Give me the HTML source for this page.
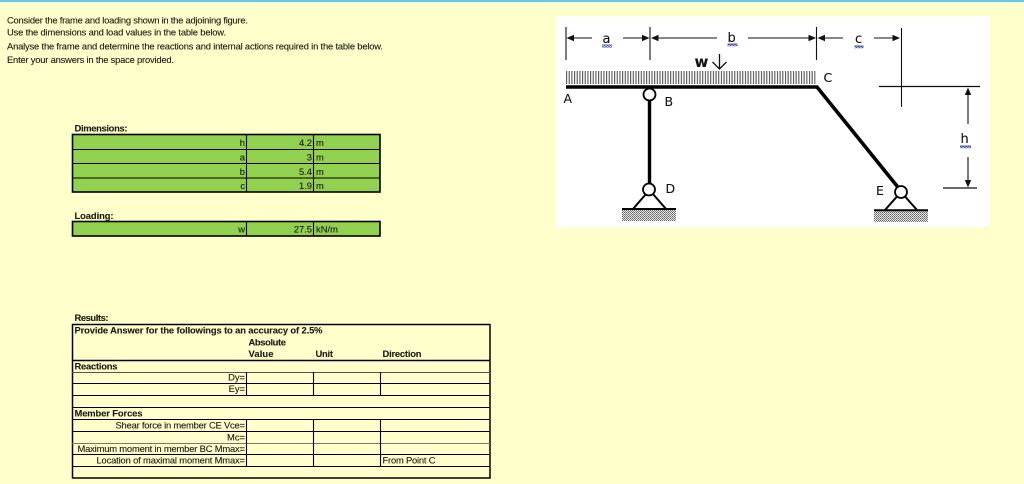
<!DOCTYPE html>
<html>
<head>
<meta charset="utf-8">
<style>
html,body{margin:0;padding:0;background:#ffffcc;width:1024px;height:484px;overflow:hidden}
svg{display:block}
text{font-family:"Liberation Sans",Arial,sans-serif;font-size:9.4px;fill:#1c1c14;stroke:#1c1c14;stroke-width:.12}
.b{font-weight:bold}
.fig{font-family:"DejaVu Sans",sans-serif;fill:#111;stroke:#111;stroke-width:.1}
.r{text-anchor:end}
</style>
</head>
<body>
<svg width="1024" height="484" viewBox="0 0 1024 484" xmlns="http://www.w3.org/2000/svg">
<defs>
<pattern id="load" width="2.67" height="13" patternUnits="userSpaceOnUse" x="566">
<rect x="0" width="1.1" height="13" fill="#555"/>
</pattern>
<pattern id="hatch" width="2" height="2" patternUnits="userSpaceOnUse">
<rect width="2" height="2" fill="#e4e4e4"/>
<rect width="1" height="1" fill="#666"/>
<rect x="1" y="1" width="1" height="1" fill="#888"/>
</pattern>
<pattern id="sq" width="3" height="2" patternUnits="userSpaceOnUse">
<path d="M0 .4 L1.500 1.600 L3 .4" fill="none" stroke="#1f48e8" stroke-width=".9"/>
</pattern>
</defs>

<rect width="1024" height="484" fill="#ffffcc"/>
<rect width="1024" height="2" fill="#62c6ee"/>

<!-- Intro -->
<text x="7" y="23.5" textLength="241">Consider the frame and loading shown in the adjoining figure.</text>
<text x="7" y="35.5" textLength="219">Use the dimensions and load values in the table below.</text>
<text x="7" y="49.5" textLength="376">Analyse the frame and determine the reactions and internal actions required in the table below.</text>
<text x="7" y="63" textLength="167">Enter your answers in the space provided.</text>

<!-- Dimensions -->
<text class="b" x="74.5" y="131.5" textLength="53">Dimensions:</text>
<rect x="72.5" y="134.5" width="307.5" height="57.5" fill="#92d050" stroke="#000" stroke-width="1.6"/>
<path d="M72 149.5H380M72 163.500H380M72 178H380M246.500 134V192M313.500 134V192" stroke="#000" stroke-width="1.100" fill="none"/>
<text class="r" x="245" y="146">h</text>
<text class="r" x="245" y="160.500">a</text>
<text class="r" x="245" y="175">b</text>
<text class="r" x="245" y="189">c</text>
<text class="r" x="312" y="146">4.2</text>
<text class="r" x="312" y="160.500">3</text>
<text class="r" x="312" y="175">5.4</text>
<text class="r" x="312" y="189">1.9</text>
<text x="316" y="146">m</text>
<text x="316" y="160.500">m</text>
<text x="316" y="175">m</text>
<text x="316" y="189">m</text>

<!-- Loading -->
<text class="b" x="74.500" y="219" textLength="39">Loading:</text>
<rect x="72.500" y="221.500" width="307.500" height="14.500" fill="#92d050" stroke="#000" stroke-width="1.600"/>
<path d="M246.500 221V236M313.500 221V236" stroke="#000" stroke-width="1.100"/>
<text class="r" x="245" y="232.500">w</text>
<text class="r" x="312" y="232.500">27.5</text>
<text x="316" y="232.500">kN/m</text>

<!-- Results -->
<text class="b" x="74.500" y="321" textLength="34">Results:</text>
<rect x="72.500" y="324.500" width="417.500" height="153.500" fill="none" stroke="#000" stroke-width="1.500"/>
<g stroke="#000" stroke-width="1.100" fill="none">
<path d="M72 360.500H490" stroke-width="1.500"/>
<path d="M72 372.500H490" stroke="#55554a"/>
<path d="M72 383.500H490M72 395.500H490M72 407.500H490M72 419.500H490M72 431.500H490M72 454.500H490M72 466.500H490"/>
<path d="M72 443.500H490" stroke="#77776a"/>
<path d="M246.500 372V395M313.500 372V395M380.500 372V395M246.500 419V466M313.500 419V466M380.500 419V466"/>
</g>
<text class="b" x="74.500" y="333.500" textLength="248">Provide Answer for the followings to an accuracy of 2.5%</text>
<text class="b" x="248.500" y="345.500" textLength="37.500">Absolute</text>
<text class="b" x="248.500" y="357" textLength="25">Value</text>
<text class="b" x="315.500" y="357" textLength="17.500">Unit</text>
<text class="b" x="382.500" y="357" textLength="39">Direction</text>
<text class="b" x="74.500" y="369.500" textLength="43">Reactions</text>
<text class="r" x="245" y="380.500">Dy=</text>
<text class="r" x="245" y="392">Ey=</text>
<text class="b" x="74.500" y="416.500" textLength="68">Member Forces</text>
<text x="115.500" y="428.500" textLength="129.500">Shear force in member CE Vce=</text>
<text class="r" x="245" y="440.500">Mc=</text>
<text x="77.500" y="452" textLength="167.500">Maximum moment in member BC Mmax=</text>
<text x="96.500" y="463.500" textLength="148.500">Location of maximal moment Mmax=</text>
<text x="382.500" y="463.500" textLength="53">From Point C</text>

<!-- Figure -->
<rect x="556" y="16" width="434" height="211" fill="#fff"/>

<!-- Load lines -->
<rect x="566" y="71" width="249.500" height="13" fill="url(#load)"/>

<!-- Dimension lines -->
<g stroke="#111" stroke-width="1.100" fill="none">
<path d="M566 27V60M650 27V60M816.500 27V60M901.500 28V107"/>
<path d="M879 86.500H980M943 188H977" stroke-width="1.200"/>
<path d="M570 38H592M623 38H646M655 38H717M748 38H813M821 38H843M874 38H896"/>
<path d="M968 92V124M968 157V184"/>
</g>
<g fill="#111">
<path d="M566.500 38L574 34.800V41.200Z"/>
<path d="M649.500 38L642 34.800V41.200Z"/>
<path d="M651 38L658.500 34.800V41.200Z"/>
<path d="M816 38L808.500 34.800V41.200Z"/>
<path d="M817.500 38L825 34.800V41.200Z"/>
<path d="M900 38L892.500 34.800V41.200Z"/>
<path d="M968 87.500L964.800 95H971.200Z"/>
<path d="M968 187.500L964.800 180H971.200Z"/>
</g>

<!-- Beam and members -->
<path d="M566 87H817L901 191" fill="none" stroke="#000" stroke-width="3.600" stroke-linejoin="miter"/>
<path d="M649.500 94V190" stroke="#000" stroke-width="3.400"/>

<!-- Supports -->
<path d="M649.500 190L633 209M649.500 190L666 209M901 192L885 210M901 192L917 210" stroke="#000" stroke-width="2" fill="none"/>
<rect x="622" y="210" width="54" height="11" fill="url(#hatch)"/>
<rect x="874" y="211" width="54" height="11" fill="url(#hatch)"/>
<path d="M622 209H676M874 210.300H928" stroke="#000" stroke-width="2"/>
<circle cx="649.500" cy="94.500" r="6" fill="#fff" stroke="#000" stroke-width="1.800"/>
<circle cx="649" cy="189.500" r="6" fill="#fff" stroke="#000" stroke-width="1.800"/>
<circle cx="901" cy="192" r="6" fill="#fff" stroke="#000" stroke-width="1.800"/>

<!-- w arrow -->
<text x="694.500" y="67" style="font-family:'DejaVu Sans',sans-serif;font-size:15px;font-weight:bold;fill:#111">w</text>
<path d="M719.500 54V69M712.500 62L719.500 69L726.500 62" stroke="#111" stroke-width="1.300" fill="none"/>

<!-- Labels -->
<text class="fig" x="563.500" y="103" style="font-size:12.500px">A</text>
<text class="fig" x="664.500" y="106" style="font-size:12.500px">B</text>
<text class="fig" x="665.500" y="193" style="font-size:12.500px">D</text>
<text class="fig" x="823.500" y="82" style="font-size:12.500px">C</text>
<text class="fig" x="876" y="195" style="font-size:12.500px">E</text>
<text class="fig" x="602.500" y="43" style="font-size:13px">a</text>
<text class="fig" x="727.500" y="42" style="font-size:13px">b</text>
<text class="fig" x="855" y="43" style="font-size:13px">c</text>
<text class="fig" x="960.500" y="143" style="font-size:13px">h</text>
<g fill="url(#sq)">
<rect x="602" y="45.500" width="10" height="2"/>
<rect x="727.500" y="44.500" width="10" height="2"/>
<rect x="854.500" y="46.500" width="9" height="2"/>
<rect x="960" y="146.500" width="11" height="2"/>
</g>
<path d="M602 45H612M727.500 44H737.500M854.500 46H863.500M960 146H971" stroke="#333" stroke-width=".8"/>
</svg>
</body>
</html>
